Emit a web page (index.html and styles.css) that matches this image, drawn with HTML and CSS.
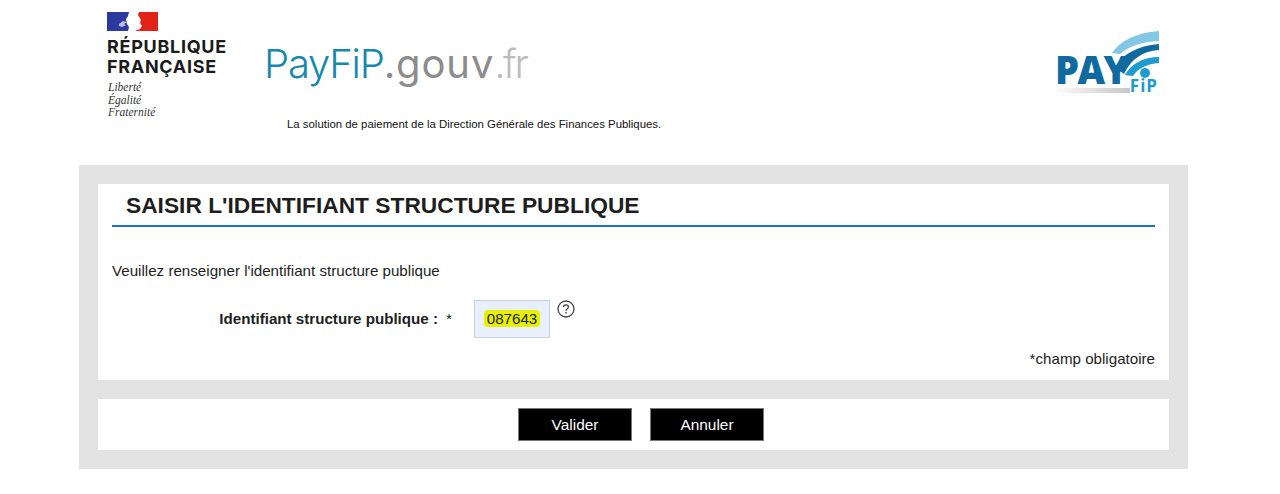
FILE: index.html
```html
<!DOCTYPE html>
<html lang="fr">
<head>
  <meta charset="UTF-8" />
  <meta name="viewport" content="width=device-width, initial-scale=1.0" />
  <title>PayFiP.gouv.fr</title>
  <link rel="stylesheet" href="styles.css">
</head>
<body>
  <header class="site-header">
    <div class="rf-logo">
      <svg class="rf-flag" width="51" height="19" viewBox="0 0 51 19" aria-hidden="true">
        <path d="M0 0H22L21 4 19 7 20 12 22 15 21 19H0Z" fill="#2b3a9c"/>
        <path d="M12 12 16 9 20 10 17 12 19 13 15 15 12 14Z" fill="#b9bfe2"/>
        <path d="M32 0H51V19H28L33 17 35 14 33 11 34 8 31 3Z" fill="#e2231a"/>
      </svg>
      <div class="rf-name">RÉPUBLIQUE<br>FRANÇAISE</div>
      <div class="rf-motto">Liberté<br>Égalité<br>Fraternité</div>
    </div>

    <div class="brand">
      <div class="brand-name"><span class="brand-pay">PayFiP</span>.gouv<span class="brand-tld">.fr</span></div>
      <p class="brand-tag">La solution de paiement de la Direction Générale des Finances Publiques.</p>
    </div>

    <div class="pay-logo">
      <svg class="pay-waves" width="70" height="66" viewBox="0 0 70 66" aria-hidden="true">
        <path d="M21 23C29 11 44 3 68 1V11C50 12 38 16 29 24Z" fill="#82c8e4"/>
        <path d="M24 37C32 24 46 16 68 14V20C52 21 40 29 33 44Z" fill="#0e6a9f"/>
        <path d="M34 45C40 34 52 27 68 27V33C56 34 47 38 42 46Z" fill="#1e9bd0"/>
        <circle cx="54" cy="43" r="5" fill="#1e9bd0"/>
      </svg>
      <span class="pay-word">PAY</span>
      <span class="pay-fip">FiP</span>
      <span class="pay-shadow"></span>
    </div>
  </header>

  <main class="panel">
    <section class="card card-form">
      <h1 class="card-title">SAISIR L'IDENTIFIANT STRUCTURE PUBLIQUE</h1>
      <p class="intro">Veuillez renseigner l'identifiant structure publique</p>
      <div class="field-row">
        <label class="field-label" for="ident">Identifiant structure publique :</label>
        <span class="required">*</span>
        <div class="field-input"><mark class="hl">087643</mark></div>
        <svg class="help" width="18" height="18" viewBox="0 0 18 18" aria-hidden="true">
          <circle cx="9" cy="9" r="8" fill="none" stroke="#444" stroke-width="1.300"/>
          <path d="M6.500 7C6.500 5.600 7.700 4.800 9 4.800S11.500 5.700 11.500 7C11.500 8.600 9 8.800 9 10.700" fill="none" stroke="#444" stroke-width="1.300"/>
          <rect x="8.300" y="12" width="1.400" height="1.500" fill="#444"/>
        </svg>
      </div>
      <p class="note">*champ obligatoire</p>
    </section>

    <section class="card card-actions">
      <button class="btn" type="button">Valider</button>
      <button class="btn" type="button">Annuler</button>
    </section>
  </main>
</body>
</html>
```

FILE: styles.css
```css
* {
  box-sizing: border-box;
  margin: 0;
  padding: 0;
}

body {
  background: #fff;
  color: #1e1e1e;
  font-family: 'Liberation Sans', Arial, sans-serif;
  font-size: 15.150px;
  height: 494px;
  overflow: hidden;
}

/* Header */
.site-header {
  display: flex;
  height: 165px;
  padding: 12px 120px 0 107px;
}

.rf-logo {
  width: 157px;
}

.rf-flag {
  display: block;
}

.rf-name {
  margin-top: 6px;
  font-family: Inter, sans-serif;
  font-weight: 700;
  font-size: 18px;
  line-height: 20px;
  letter-spacing: 0.700px;
  color: #1b1b1b;
}

.rf-motto {
  margin: 4px 0 0 1px;
  font-family: 'Liberation Serif', serif;
  font-style: italic;
  font-size: 11.500px;
  line-height: 12.500px;
  color: #333;
}

.brand {
  flex: 1;
}

.brand-name {
  margin-top: 22px;
  font-family: Inter, sans-serif;
  font-weight: 400;
  font-size: 40px;
  line-height: 60px;
  letter-spacing: 0.900px;
  color: #8c8c8c;
  white-space: nowrap;
}

.brand-pay {
  font-weight: 300;
  letter-spacing: -1.200px;
  color: #1588ad;
}

.brand-tld {
  font-weight: 300;
  letter-spacing: -2.500px;
  color: #bcbcbc;
}

.brand-tag {
  margin: 24px 0 0 23px;
  font-size: 11.400px;
  line-height: 12px;
  color: #111;
}

.pay-logo {
  position: relative;
  width: 105px;
  height: 66px;
  margin-top: 18px;
}

.pay-waves {
  position: absolute;
  right: -1px;
  top: 0;
}

.pay-word {
  position: absolute;
  left: 0;
  top: 14px;
  font-family: 'Open Sans', sans-serif;
  font-weight: 800;
  font-size: 38px;
  line-height: 50px;
  letter-spacing: -1.500px;
  color: #0e6a9f;
}

.pay-fip {
  position: absolute;
  right: 2px;
  bottom: 2px;
  font-family: 'Open Sans', sans-serif;
  font-weight: 700;
  font-size: 17px;
  line-height: 16px;
  letter-spacing: 1px;
  color: #1e9bd0;
}

.pay-shadow {
  position: absolute;
  left: 2px;
  bottom: 3px;
  width: 73px;
  height: 5px;
  background: linear-gradient(to right, #fafafa, #c8c8c8);
}

/* Panel */
.panel {
  display: flex;
  flex-direction: column;
  gap: 19px;
  width: 1109px;
  height: 304px;
  margin-left: 79px;
  padding: 19px;
  background: #e3e3e3;
}

.card {
  background: #fff;
}

.card-form {
  height: 196px;
  padding: 0 14px;
}

.card-title {
  height: 43px;
  padding: 7px 0 0 14px;
  border-bottom: 2px solid #1a75b5;
  font-size: 22.750px;
  line-height: 28px;
  font-weight: 700;
  color: #1e1e1e;
}

.intro {
  margin-top: 36px;
  line-height: 16px;
}

.field-row {
  display: flex;
  align-items: flex-start;
  margin-top: 21px;
}

.field-label {
  width: 326px;
  margin-top: 11px;
  font-weight: 700;
  line-height: 16px;
  text-align: right;
  white-space: nowrap;
}

.required {
  width: 36px;
  margin-top: 11px;
  padding-left: 8px;
  line-height: 16px;
}

.field-input {
  width: 76px;
  height: 38px;
  padding-top: 10px;
  border: 1px solid #ccd0da;
  background: #e8f0fe;
  text-align: center;
  line-height: 16px;
}

.hl {
  padding: 0 3px;
  border-radius: 4px;
  background: #e6f000;
  color: #1e1e1e;
}

.help {
  margin-left: 7px;
}

.note {
  margin-top: 13px;
  text-align: right;
  line-height: 16px;
}

.card-actions {
  display: flex;
  justify-content: center;
  align-items: center;
  gap: 18px;
  height: 51px;
  padding-left: 15px;
}

.btn {
  width: 114px;
  height: 33px;
  border: 1px solid #777;
  background: #000;
  color: #fff;
  font-family: 'Liberation Sans', Arial, sans-serif;
  font-size: 15.400px;
}
```
